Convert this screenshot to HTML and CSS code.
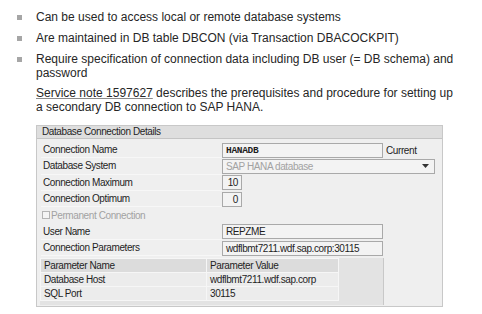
FILE: index.html
```html
<!DOCTYPE html>
<html>

<head>
    <meta charset="utf-8">
    <title>Secondary DB Connections</title>
    <link rel="stylesheet" href="styles.css">
</head>

<body>
    <ul class="points">
        <li>Can be used to access local or remote database systems</li>
        <li>Are maintained in DB table DBCON (via Transaction DBACOCKPIT)</li>
        <li>Require specification of connection data including DB user (= DB schema) and password</li>
    </ul>
    <p class="note"><span class="link">Service note 1597627</span><span> describes the prerequisites and procedure for setting up a secondary DB connection to SAP HANA.</span></p>

    <div class="panel">
        <div class="panel-title">Database Connection Details</div>
        <div class="form">
            <div class="label">Connection Name</div>
            <div class="value">
                <span class="field wide mono">HANADB</span>
                <span class="after">Current</span>
            </div>

            <div class="label">Database System</div>
            <div class="value">
                <span class="field select disabled">SAP HANA database
                    <svg class="arrow" width="7" height="4" viewBox="0 0 7 4"><path d="M0 0H7L3.5 4Z" fill="#333"/></svg>
                </span>
            </div>

            <div class="label">Connection Maximum</div>
            <div class="value"><span class="field tiny">10</span></div>

            <div class="label">Connection Optimum</div>
            <div class="value"><span class="field tiny">0</span></div>

            <div class="check disabled"><span class="box"></span>Permanent Connection</div>

            <div class="label">User Name</div>
            <div class="value"><span class="field wide">REPZME</span></div>

            <div class="label">Connection Parameters</div>
            <div class="value"><span class="field wide">wdflbmt7211.wdf.sap.corp:30115</span></div>
        </div>

        <div class="grid">
            <table class="params">
                <tr>
                    <th>Parameter Name</th>
                    <th>Parameter Value</th>
                </tr>
                <tr>
                    <td>Database Host</td>
                    <td>wdflbmt7211.wdf.sap.corp</td>
                </tr>
                <tr>
                    <td>SQL Port</td>
                    <td>30115</td>
                </tr>
            </table>
        </div>
    </div>
</body>

</html>
```

FILE: styles.css
```css
html, body {
    font-family: "Liberation Sans", Arial, sans-serif;
    color: #262626;
    background: #ffffff;
}

body {
    margin: 0;
    padding: 0;
}

.points {
    list-style: none;
    margin: 0;
    padding: 10px 0 0 36px;
    width: 422px;
    font-size: 12px;
    line-height: 14px;
}

.points li {
    position: relative;
    margin-bottom: 7px;
}

.points li:last-child {
    margin-bottom: 6px;
}

.points li::before {
    content: "";
    position: absolute;
    left: -19px;
    top: 5px;
    width: 5px;
    height: 5px;
    background: #a6a6a6;
}

.note {
    margin: 0 0 0 36px;
    width: 422px;
    font-size: 12px;
    line-height: 14px;
}

.link {
    text-decoration: underline;
    text-decoration-color: #8a8a8a;
}

.panel {
    margin: 11px 0 0 36px;
    width: 405px;
    height: 180px;
    border: 1px solid #c8c8c8;
    background: #efefef;
    font-family: "Liberation Sans", Arial, sans-serif;
    font-size: 10px;
    letter-spacing: -0.4px;
    color: #1e1e1e;
}

.panel-title {
    height: 12px;
    line-height: 12px;
    padding-left: 5px;
    background: #dedede;
    border-bottom: 1px solid #c4c4c4;
}

.form {
    display: grid;
    grid-template-columns: 181px auto;
    grid-auto-rows: 16.33px;
    padding: 3px 0 0 4px;
}

.label {
    display: flex;
    align-items: center;
    padding-left: 2px;
    border-bottom: 1px solid #f7f7f7;
}

.value {
    display: flex;
    align-items: center;
    gap: 3px;
}

.field {
    display: flex;
    align-items: center;
    box-sizing: border-box;
    height: 15px;
    padding: 0 3px;
    background: #f3f3f3;
    border: 1px solid #a9a9a9;
    white-space: nowrap;
}

.wide {
    width: 161px;
}

.tiny {
    width: 20px;
    justify-content: flex-end;
}

.select {
    width: 213px;
    justify-content: space-between;
    padding-right: 5px;
}

.mono {
    font-family: "Liberation Mono", monospace;
    font-weight: bold;
    font-size: 9.5px;
    letter-spacing: -0.3px;
}

.disabled {
    color: #a2a2a2;
}

.check {
    grid-column: 1 / 3;
    display: flex;
    align-items: center;
    padding-left: 1px;
}

.box {
    width: 6px;
    height: 6px;
    margin-right: 1px;
    border: 1px solid #b4b4b4;
    background: #f4f4f4;
}

.grid {
    margin: 2px 0 0 3px;
    width: 343px;
    height: 47px;
    background: #e3e3e3;
    border-right: 1px solid #c8c8c8;
}

.params {
    border-collapse: collapse;
}

.params th,
.params td {
    height: 13px;
    padding: 0 0 0 3px;
    font-weight: normal;
    text-align: left;
    border: 1px solid #f6f6f6;
    line-height: 12px;
}

.params th {
    background: #dcdcdc;
    width: 162px;
}

.params th + th {
    width: 128px;
}

.params td {
    background: #ececec;
}
```
